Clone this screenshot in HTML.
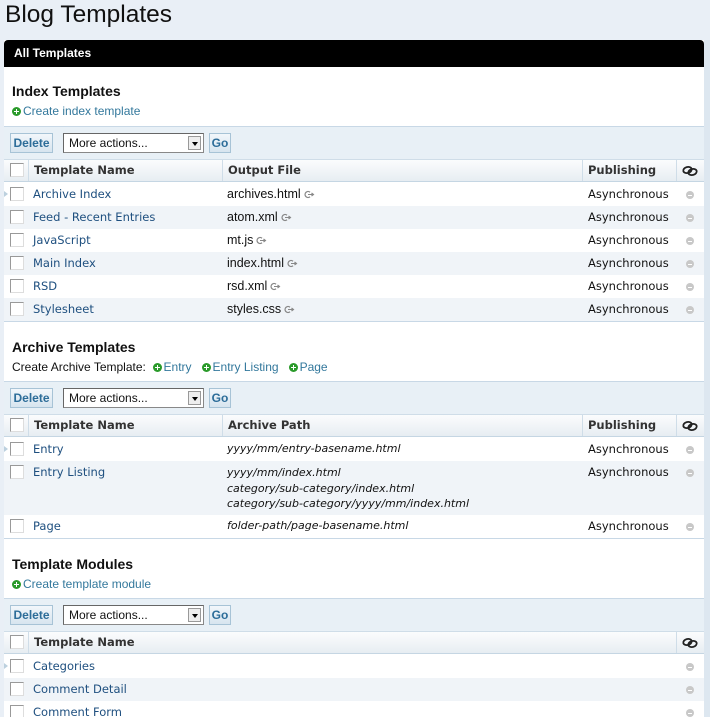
<!DOCTYPE html>
<html><head><meta charset="utf-8"><style>
*{margin:0;padding:0;box-sizing:border-box}
html,body{width:710px;height:717px;overflow:hidden}
body{background:#e9eff6;font-family:"Liberation Sans",sans-serif;position:relative}
h1{position:absolute;left:5px;top:1px;font-size:24.5px;font-weight:normal;color:#111}
.panel{position:absolute;left:4px;top:40px;width:700px;height:677px;background:#fff;overflow:hidden}
.bar{height:27px;background:#000;color:#fff;font-weight:bold;font-size:12px;line-height:27px;padding-left:10px;border-radius:4px 4px 0 0}
.h{position:absolute;left:8px;font-size:14px;font-weight:bold;color:#111}
.lk{position:absolute;left:8px;font-size:12px;color:#33789c}
.plus{display:inline-block;width:9px;height:9px;border-radius:50%;background:#2a9a2a;position:relative;vertical-align:-1px;margin-right:2px}
.plus:before{content:"";position:absolute;left:2px;top:4px;width:5px;height:1px;background:#fff}
.plus:after{content:"";position:absolute;left:4px;top:2px;width:1px;height:5px;background:#fff}
.act{position:absolute;left:0;width:700px;height:34px;background:#e8f0f6;border-top:1px solid #c8d8e6}
.btn{position:absolute;top:6px;height:20px;border:1px solid #a7c3d6;background:linear-gradient(#f2f7fb,#d7e5ef);color:#2d6d99;font-weight:bold;font-size:12px;line-height:18px;text-align:center}
.sel{position:absolute;left:59px;top:6px;width:141px;height:20px;background:#fff;border:1px solid #888;border-top-color:#666;border-left-color:#666;font-size:12px;line-height:18px;padding-left:5px;color:#111}
.sel i{position:absolute;right:2px;top:2px;width:13px;height:14px;border:1px solid #999;background:#eee}
.sel i:after{content:"";position:absolute;left:3px;top:5px;border:3px solid transparent;border-top:4px solid #000}
.hd{position:absolute;left:0;width:700px;height:23px;background:linear-gradient(#fbfcfd,#e7edf2);border-top:1px solid #cfdde8;border-bottom:1px solid #c5d6e3;font-family:"DejaVu Sans",sans-serif;font-weight:bold;font-size:11.5px;color:#333}
.c{position:absolute;top:0;height:100%;line-height:21px}
.hd .c{border-left:1px solid #cfdde8}
.row{position:absolute;left:0;width:700px;height:23px;font-size:12px;color:#111}
.row.s{background:#f0f4f8}
.nm{font-family:"DejaVu Sans",sans-serif;font-size:11.5px;color:#1e4f7f;line-height:22px}
.pb{font-family:"DejaVu Sans",sans-serif;font-size:11.5px;line-height:22px}
.of{line-height:22px;font-size:12.5px}
.it{font-family:"DejaVu Sans",sans-serif;font-style:italic;font-size:11px;line-height:15.5px;padding-top:4px}
.cb{position:absolute;left:6px;top:4px;width:14px;height:14px;border:1px solid #999;border-right-color:#ddd;border-bottom-color:#ddd;background:#fff}
.tri{position:absolute;left:0;top:8px;border:3px solid transparent;border-left:4px solid #bcd0de}
.dot{position:absolute;left:682px;top:8px;width:8px;height:8px;border-radius:50%;background:#c8c8c8}
.dot:after{content:"";position:absolute;left:2px;top:3.5px;width:4px;height:1px;background:#fff}
.arr{display:inline-block;margin-left:3px;vertical-align:-1px}
.chain{position:absolute;left:678px;top:5px}
</style></head><body>
<h1>Blog Templates</h1>
<div style="position:absolute;left:704px;top:40px;width:6px;height:680px;background:#dde7f0"></div>
<div class="panel">
<div class="bar">All Templates</div>

<div class="h" style="top:43px">Index Templates</div>
<div class="lk" style="top:64px"><span class="plus"></span>Create index template</div>
<div class="act" style="top:86px"><div class="btn" style="left:6px;width:43px">Delete</div><div class="sel">More actions...<i></i></div><div class="btn" style="left:205px;width:22px">Go</div></div>
<div class="hd" style="top:119px"><div class="cb" style="top:3px"></div><div class="c" style="left:24px;padding-left:5px;width:194px">Template Name</div><div class="c" style="left:218px;padding-left:5px;width:360px">Output File</div><div class="c" style="left:578px;padding-left:5px;width:94px">Publishing</div><div class="c" style="left:672px;width:28px"></div><svg class="chain" width="16" height="12" viewBox="0 0 16 12"><ellipse cx="5.5" cy="5" rx="4.3" ry="3" fill="none" stroke="#222" stroke-width="1.8" transform="rotate(-15 5.5 5)"/><ellipse cx="10.5" cy="7" rx="4.3" ry="3" fill="none" stroke="#222" stroke-width="1.8" transform="rotate(-15 10.5 7)"/></svg></div>

<div class="row" style="top:143px"><div class="tri"></div><div class="cb"></div><div class="c nm" style="left:29px">Archive Index</div><div class="c of" style="left:223px">archives.html<svg class="arr" width="11" height="9" viewBox="0 0 11 9"><path d="M6 2.2A3 3 0 1 0 6 6.8" fill="none" stroke="#888" stroke-width="1.3"/><path d="M4 4.5H9M7.5 3L9.5 4.5L7.5 6" fill="none" stroke="#888" stroke-width="1.1"/></svg></div><div class="c pb" style="left:584px">Asynchronous</div><div class="dot"></div></div>
<div class="row s" style="top:166px"><div class="cb"></div><div class="c nm" style="left:29px">Feed - Recent Entries</div><div class="c of" style="left:223px">atom.xml<svg class="arr" width="11" height="9" viewBox="0 0 11 9"><path d="M6 2.2A3 3 0 1 0 6 6.8" fill="none" stroke="#888" stroke-width="1.3"/><path d="M4 4.5H9M7.5 3L9.5 4.5L7.5 6" fill="none" stroke="#888" stroke-width="1.1"/></svg></div><div class="c pb" style="left:584px">Asynchronous</div><div class="dot"></div></div>
<div class="row" style="top:189px"><div class="cb"></div><div class="c nm" style="left:29px">JavaScript</div><div class="c of" style="left:223px">mt.js<svg class="arr" width="11" height="9" viewBox="0 0 11 9"><path d="M6 2.2A3 3 0 1 0 6 6.8" fill="none" stroke="#888" stroke-width="1.3"/><path d="M4 4.5H9M7.5 3L9.5 4.5L7.5 6" fill="none" stroke="#888" stroke-width="1.1"/></svg></div><div class="c pb" style="left:584px">Asynchronous</div><div class="dot"></div></div>
<div class="row s" style="top:212px"><div class="cb"></div><div class="c nm" style="left:29px">Main Index</div><div class="c of" style="left:223px">index.html<svg class="arr" width="11" height="9" viewBox="0 0 11 9"><path d="M6 2.2A3 3 0 1 0 6 6.8" fill="none" stroke="#888" stroke-width="1.3"/><path d="M4 4.5H9M7.5 3L9.5 4.5L7.5 6" fill="none" stroke="#888" stroke-width="1.1"/></svg></div><div class="c pb" style="left:584px">Asynchronous</div><div class="dot"></div></div>
<div class="row" style="top:235px"><div class="cb"></div><div class="c nm" style="left:29px">RSD</div><div class="c of" style="left:223px">rsd.xml<svg class="arr" width="11" height="9" viewBox="0 0 11 9"><path d="M6 2.2A3 3 0 1 0 6 6.8" fill="none" stroke="#888" stroke-width="1.3"/><path d="M4 4.5H9M7.5 3L9.5 4.5L7.5 6" fill="none" stroke="#888" stroke-width="1.1"/></svg></div><div class="c pb" style="left:584px">Asynchronous</div><div class="dot"></div></div>
<div class="row s" style="top:258px;border-bottom:1px solid #c8d8e6;height:24px"><div class="cb"></div><div class="c nm" style="left:29px">Stylesheet</div><div class="c of" style="left:223px">styles.css<svg class="arr" width="11" height="9" viewBox="0 0 11 9"><path d="M6 2.2A3 3 0 1 0 6 6.8" fill="none" stroke="#888" stroke-width="1.3"/><path d="M4 4.5H9M7.5 3L9.5 4.5L7.5 6" fill="none" stroke="#888" stroke-width="1.1"/></svg></div><div class="c pb" style="left:584px">Asynchronous</div><div class="dot"></div></div>

<div class="h" style="top:299px">Archive Templates</div>
<div class="lk" style="top:320px;color:#111">Create Archive Template: &nbsp;<span style="color:#33789c"><span class="plus"></span>Entry &nbsp; <span class="plus"></span>Entry Listing &nbsp; <span class="plus"></span>Page</span></div>
<div class="act" style="top:341px"><div class="btn" style="left:6px;width:43px">Delete</div><div class="sel">More actions...<i></i></div><div class="btn" style="left:205px;width:22px">Go</div></div>
<div class="hd" style="top:374px"><div class="cb" style="top:3px"></div><div class="c" style="left:24px;padding-left:5px;width:194px">Template Name</div><div class="c" style="left:218px;padding-left:5px;width:360px">Archive Path</div><div class="c" style="left:578px;padding-left:5px;width:94px">Publishing</div><div class="c" style="left:672px;width:28px"></div><svg class="chain" width="16" height="12" viewBox="0 0 16 12"><ellipse cx="5.5" cy="5" rx="4.3" ry="3" fill="none" stroke="#222" stroke-width="1.8" transform="rotate(-15 5.5 5)"/><ellipse cx="10.5" cy="7" rx="4.3" ry="3" fill="none" stroke="#222" stroke-width="1.8" transform="rotate(-15 10.5 7)"/></svg></div>
<div class="row" style="top:398px"><div class="tri"></div><div class="cb"></div><div class="c nm" style="left:29px">Entry</div><div class="c it" style="left:223px;line-height:14px">yyyy/mm/entry-basename.html</div><div class="c pb" style="left:584px">Asynchronous</div><div class="dot"></div></div>
<div class="row s" style="top:421px;height:54px"><div class="cb"></div><div class="c nm" style="left:29px;height:23px">Entry Listing</div><div class="c it" style="left:223px">yyyy/mm/index.html<br>category/sub-category/index.html<br>category/sub-category/yyyy/mm/index.html</div><div class="c pb" style="left:584px;height:23px">Asynchronous</div><div class="dot"></div></div>
<div class="row" style="top:475px;border-bottom:1px solid #c8d8e6;height:24px"><div class="cb"></div><div class="c nm" style="left:29px">Page</div><div class="c it" style="left:223px;line-height:14px">folder-path/page-basename.html</div><div class="c pb" style="left:584px">Asynchronous</div><div class="dot"></div></div>

<div class="h" style="top:516px">Template Modules</div>
<div class="lk" style="top:537px"><span class="plus"></span>Create template module</div>
<div class="act" style="top:558px"><div class="btn" style="left:6px;width:43px">Delete</div><div class="sel">More actions...<i></i></div><div class="btn" style="left:205px;width:22px">Go</div></div>
<div class="hd" style="top:591px"><div class="cb" style="top:3px"></div><div class="c" style="left:24px;padding-left:5px;width:648px">Template Name</div><div class="c" style="left:672px;width:28px"></div><svg class="chain" width="16" height="12" viewBox="0 0 16 12"><ellipse cx="5.5" cy="5" rx="4.3" ry="3" fill="none" stroke="#222" stroke-width="1.8" transform="rotate(-15 5.5 5)"/><ellipse cx="10.5" cy="7" rx="4.3" ry="3" fill="none" stroke="#222" stroke-width="1.8" transform="rotate(-15 10.5 7)"/></svg></div>
<div class="row" style="top:615px"><div class="tri"></div><div class="cb"></div><div class="c nm" style="left:29px">Categories</div><div class="dot"></div></div>
<div class="row s" style="top:638px"><div class="cb"></div><div class="c nm" style="left:29px">Comment Detail</div><div class="dot"></div></div>
<div class="row" style="top:661px"><div class="cb"></div><div class="c nm" style="left:29px">Comment Form</div><div class="dot"></div></div>
</div>
</body></html>
